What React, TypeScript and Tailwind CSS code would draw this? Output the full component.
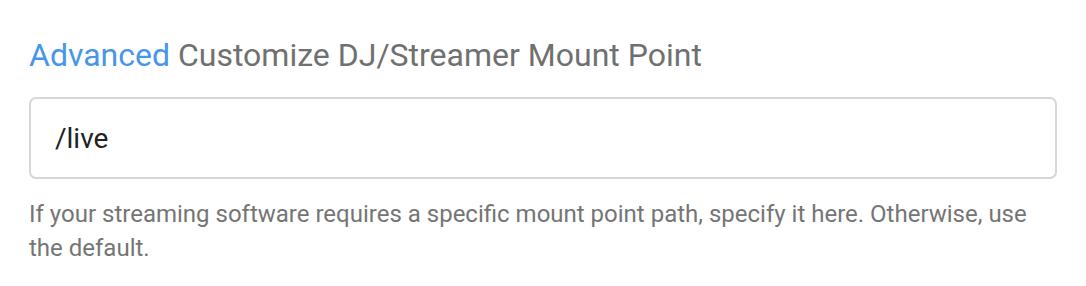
export default function App() {
  return (
    <div className="w-[1086px] h-[286px] bg-white px-[29px] pt-[35px] font-['Roboto',sans-serif]">
      <label className="block text-[32px] leading-[40px] text-[#707070]">
        <span className="text-[#4796ea]">Advanced</span> Customize DJ/Streamer Mount Point
      </label>
      <input
        type="text"
        defaultValue="/live"
        className="mt-[22px] block w-full h-[82px] rounded-[7px] border-2 border-[#d5d7db] bg-white px-[24px] text-[28px] text-[#222] outline-none"
      />
      <p className="mt-[18px] text-[24px] leading-[34px] text-[#757575]">
        If your streaming software requires a specific mount point path, specify it here. Otherwise, use the default.
      </p>
    </div>
  );
}
